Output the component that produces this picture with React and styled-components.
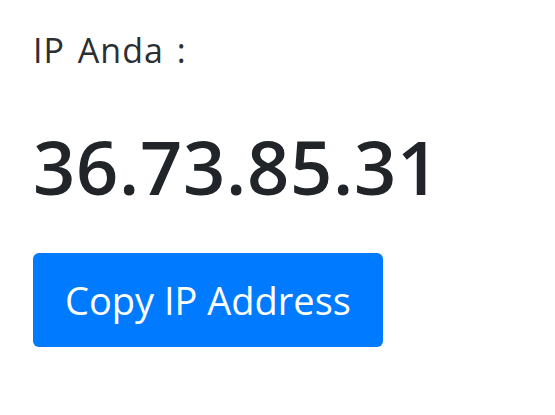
import React from "react";
import styled, { createGlobalStyle } from "styled-components";

const Global = createGlobalStyle`
  html, body {
    margin: 0;
    padding: 0;
    background: #fff;
  }
  body {
    font-family: "Open Sans", "Noto Sans", sans-serif;
    color: #212529;
  }
`;

const Page = styled.main`
  display: flex;
  flex-direction: column;
  align-items: flex-start;
  padding: 28px 33px;
`;

const Label = styled.p`
  margin: 0;
  font-size: 34px;
  line-height: 44px;
  font-weight: 400;
  letter-spacing: 1px;
  word-spacing: 3px;
  color: #2b2f33;
`;

const Address = styled.h1`
  margin: 50px 0 0;
  font-size: 74px;
  line-height: 90px;
  font-weight: 600;
  letter-spacing: 0.7px;
`;

const CopyButton = styled.button`
  margin-top: 41px;
  padding: 0 32px;
  height: 94px;
  border: none;
  border-radius: 6px;
  background: #007bff;
  color: #fff;
  font-family: inherit;
  font-size: 38px;
  cursor: pointer;
`;

export default function App() {
  const ip = "36.73.85.31";
  return (
    <>
      <Global />
      <Page>
        <Label>IP Anda :</Label>
        <Address>{ip}</Address>
        <CopyButton onClick={() => navigator.clipboard?.writeText(ip)}>
          Copy IP Address
        </CopyButton>
      </Page>
    </>
  );
}
